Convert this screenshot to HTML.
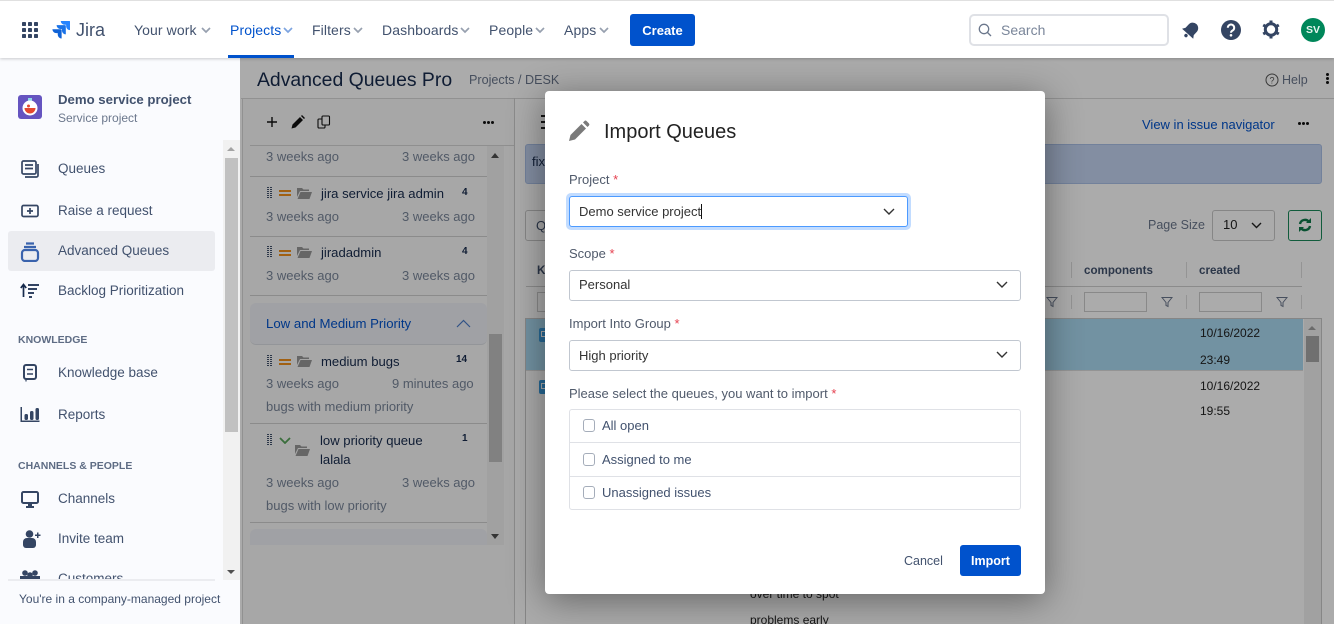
<!DOCTYPE html>
<html><head><meta charset="utf-8"><title>Import Queues</title>
<style>
*{box-sizing:border-box}
html,body{margin:0;padding:0;width:1334px;height:624px;overflow:hidden;background:#fff;font-family:"Liberation Sans",sans-serif;font-size:13px}
.t{position:absolute;white-space:nowrap;line-height:20px;margin-top:1px}
.n0{margin-top:0}
.a{position:absolute}
.nav{font-size:14px;color:#42526e;letter-spacing:.1px;margin-top:0}
.side{font-size:13.5px;color:#42526e}
.sec{font-size:10.5px;font-weight:bold;color:#5e6c84}
.q{font-size:13.1px;color:#172b4d}
.m{font-size:13px;color:#7a869a}
.lb{font-size:13px;color:#505a6b}
.sel{position:absolute;background:#fff;border:1px solid #c1c7d0;border-radius:3px}
.val{font-size:13px;color:#333}
.red{color:#e5404f}
.cb{position:absolute;left:583px;width:12px;height:13px;border:1px solid #a5adba;border-radius:3px;background:#fff}
.ln{position:absolute;background:#d0d0d0;height:1px;left:250px;width:237px}
.dh{position:absolute;left:267px;width:5px;height:11px;background:linear-gradient(90deg,transparent 2px,#f9f9f9 2px 3px,transparent 3px),repeating-linear-gradient(#42526e 0 1px,transparent 1px 2px)}
svg{position:absolute;display:block}
</style></head><body>

<!-- page content (dimmed by overlay) -->
<div class="a" id="content" style="left:240px;top:58px;width:1094px;height:566px;background:#fff;overflow:hidden">
<div style="position:absolute;left:-240px;top:-58px;width:1334px;height:624px">
  <div class="t" style="left:257px;top:69px;font-size:19.4px;color:#172b4d">Advanced Queues Pro</div>
  <div class="t n0" style="left:469px;top:70px;font-size:12.6px;color:#6b778c">Projects / DESK</div>
  <svg style="left:1265px;top:73px" width="14" height="14" viewBox="0 0 14 14"><circle cx="7" cy="7" r="6" fill="none" stroke="#555" stroke-width="1"/><text x="7" y="10.500" font-size="9" text-anchor="middle" fill="#555" font-family="Liberation Sans">?</text></svg>
  <div class="t n0" style="left:1282px;top:70px;font-size:12.500px;color:#6b778c">Help</div>
  <div class="a" style="left:1326px;top:73px;width:3px;height:3px;background:#111;border-radius:50%;box-shadow:0 4px 0 #111,0 8px 0 #111"></div>
  <div class="a" style="left:241px;top:98px;width:1093px;height:1px;background:#d8d8d8"></div>
  <div class="a" style="left:242px;top:98px;width:1px;height:526px;background:#d8d8d8"></div>
  <div class="a" style="left:514px;top:98px;width:1px;height:526px;background:#d0d0d0"></div>
  <div class="a" style="left:243px;top:99px;width:271px;height:525px;background:#f9f9f9"></div>

  <!-- queue toolbar -->
  <svg style="left:266px;top:116px" width="12" height="12" viewBox="0 0 12 12"><path d="M6 1v10M1 6h10" stroke="#111" stroke-width="1.400"/></svg>
  <svg style="left:291px;top:115px" width="14" height="14" viewBox="0 0 14 14"><path d="M0.500 13.500l1-4 7.500-7.500 3 3-7.500 7.500zM10 1l1-1 3 3-1 1z" fill="#111"/></svg>
  <svg style="left:317px;top:115px" width="14" height="14" viewBox="0 0 14 14" fill="none" stroke="#111" stroke-width="1.100"><rect x="5" y="1" width="7.500" height="9" rx="1"/><path d="M5 4H2a1 1 0 0 0-1 1v7a1 1 0 0 0 1 1h5a1 1 0 0 0 1-1v-2"/></svg>
  <div class="a" style="left:483px;top:121px;width:3px;height:3px;background:#111;border-radius:50%;box-shadow:4px 0 0 #111,8px 0 0 #111"></div>
  <div class="a" style="left:250px;top:145px;width:264px;height:1px;background:#d6d6d6"></div>

  <!-- queue scroll -->
  <div class="a" style="left:487px;top:146px;width:17px;height:399px;background:#f1f1f1"></div>
  <div class="a" style="left:489px;top:334px;width:13px;height:128px;background:#c1c1c1"></div>
  <div class="a" style="left:491px;top:153px;border:4px solid transparent;border-bottom:5px solid #505050;border-top:0"></div>
  <div class="a" style="left:491px;top:534px;border:4px solid transparent;border-top:5px solid #505050;border-bottom:0"></div>

  <div class="t m" style="left:266px;top:146px">3 weeks ago</div>
  <div class="t m" style="left:402px;top:146px">3 weeks ago</div>
  <div class="ln" style="top:176px"></div>

  <!-- row jira service -->
  <div class="dh" style="top:187px"></div>
  <div class="a" style="left:279px;top:190px;width:12px;height:2px;background:#f18f1b;box-shadow:0 4px 0 #f18f1b"></div>
  <svg style="left:297px;top:187px" width="15" height="12" viewBox="0 0 15 12"><path d="M0 1h5l1.500 1.500H12V4H3L0 10z" fill="#999"/><path d="M3.500 5H15l-2.500 7H0.500z" fill="#999"/></svg>
  <div class="t q" style="left:321px;top:183px">jira service jira admin</div>
  <div class="t" style="left:462px;top:182px;font-size:10px;font-weight:bold;color:#172b4d">4</div>
  <div class="t m" style="left:266px;top:206px">3 weeks ago</div>
  <div class="t m" style="left:402px;top:206px">3 weeks ago</div>
  <div class="ln" style="top:236px"></div>

  <!-- row jiradmin -->
  <div class="dh" style="top:246px"></div>
  <div class="a" style="left:279px;top:250px;width:12px;height:2px;background:#f18f1b;box-shadow:0 4px 0 #f18f1b"></div>
  <svg style="left:297px;top:246px" width="15" height="12" viewBox="0 0 15 12"><path d="M0 1h5l1.500 1.500H12V4H3L0 10z" fill="#999"/><path d="M3.500 5H15l-2.500 7H0.500z" fill="#999"/></svg>
  <div class="t q" style="left:321px;top:242px">jiradadmin</div>
  <div class="t" style="left:462px;top:241px;font-size:10px;font-weight:bold;color:#172b4d">4</div>
  <div class="t m" style="left:266px;top:265px">3 weeks ago</div>
  <div class="t m" style="left:402px;top:265px">3 weeks ago</div>
  <div class="ln" style="top:295px"></div>

  <!-- group -->
  <div class="a" style="left:250px;top:303px;width:237px;height:42px;background:#eff1f6;border-radius:6px;border-bottom:1px solid #dcdfe4"></div>
  <div class="t n0" style="left:266px;top:314px;font-size:13.200px;color:#0052cc">Low and Medium Priority</div>
  <svg style="left:456px;top:319px" width="15" height="9" viewBox="0 0 15 9"><path d="M1 8l6.500-6.500L14 8" fill="none" stroke="#4a7bc8" stroke-width="1.200"/></svg>

  <!-- medium bugs -->
  <div class="dh" style="top:355px"></div>
  <div class="a" style="left:279px;top:359px;width:12px;height:2px;background:#f18f1b;box-shadow:0 4px 0 #f18f1b"></div>
  <svg style="left:297px;top:355px" width="15" height="12" viewBox="0 0 15 12"><path d="M0 1h5l1.500 1.500H12V4H3L0 10z" fill="#999"/><path d="M3.500 5H15l-2.500 7H0.500z" fill="#999"/></svg>
  <div class="t q" style="left:321px;top:351px">medium bugs</div>
  <div class="t" style="left:456px;top:349px;font-size:10px;font-weight:bold;color:#172b4d">14</div>
  <div class="t m" style="left:266px;top:373px">3 weeks ago</div>
  <div class="t m" style="left:392px;top:373px">9 minutes ago</div>
  <div class="t m" style="left:266px;top:396px">bugs with medium priority</div>
  <div class="ln" style="top:423px"></div>

  <!-- low priority -->
  <div class="dh" style="top:434px"></div>
  <svg style="left:279px;top:437px" width="12" height="7" viewBox="0 0 12 7"><path d="M1 1l5 5 5-5" fill="none" stroke="#57a55a" stroke-width="1.800"/></svg>
  <svg style="left:295px;top:444px" width="15" height="12" viewBox="0 0 15 12"><path d="M0 1h5l1.500 1.500H12V4H3L0 10z" fill="#999"/><path d="M3.500 5H15l-2.500 7H0.500z" fill="#999"/></svg>
  <div class="t q" style="left:320px;top:430px">low priority queue</div>
  <div class="t q" style="left:320px;top:449px">lalala</div>
  <div class="t" style="left:462px;top:428px;font-size:10px;font-weight:bold;color:#172b4d">1</div>
  <div class="t m" style="left:266px;top:472px">3 weeks ago</div>
  <div class="t m" style="left:402px;top:472px">3 weeks ago</div>
  <div class="t m" style="left:266px;top:495px">bugs with low priority</div>
  <div class="ln" style="top:522px"></div>
  <div class="a" style="left:250px;top:529px;width:237px;height:16px;background:#eff1f6;border-radius:6px 6px 0 0"></div>

  <!-- right side -->
  <div class="a" style="left:541px;top:115px;width:12px;height:2px;background:#222;box-shadow:0 6px 0 #222,0 12px 0 #222"></div>
  <div class="t n0" style="left:1142px;top:115px;font-size:13px;color:#0052cc">View in issue navigator</div>
  <div class="a" style="left:1298px;top:122px;width:3px;height:3px;background:#111;border-radius:50%;box-shadow:4px 0 0 #111,8px 0 0 #111"></div>
  <div class="a" style="left:525px;top:144px;width:797px;height:40px;background:#c4d4f2;border:1px solid #aac0e8;border-radius:3px"></div>
  <div class="t" style="left:532px;top:151px;font-size:13px;color:#172b4d">fix</div>
  <div class="a" style="left:525px;top:210px;width:100px;height:31px;border:1px solid #c8c8c8;border-radius:3px"></div>
  <div class="t" style="left:536px;top:215px;font-size:13px;color:#42526e">Q</div>

  <div class="t n0" style="left:1148px;top:215px;font-size:12.500px;color:#6b778c">Page Size</div>
  <div class="a" style="left:1212px;top:210px;width:63px;height:31px;border:1px solid #c8c8c8;border-radius:3px"></div>
  <div class="t n0" style="left:1223px;top:215px;font-size:13px;color:#222">10</div>
  <svg style="left:1251px;top:222px" width="11" height="7" viewBox="0 0 11 7"><path d="M1 1l4.500 4.500L10 1" fill="none" stroke="#222" stroke-width="1.400"/></svg>
  <div class="a" style="left:1288px;top:210px;width:34px;height:31px;border:1px solid #1a8a5a;border-radius:3px"></div>
  <svg style="left:1298px;top:218px" width="14" height="14" viewBox="0 0 14 14" fill="none" stroke="#0d7a4a" stroke-width="2.400"><path d="M2 6a5 5 0 0 1 9-2"/><path d="M12 8a5 5 0 0 1-9 2"/><path d="M13 0v5H8z" fill="#0d7a4a" stroke="none"/><path d="M1 14V9h5z" fill="#0d7a4a" stroke="none"/></svg>

  <div class="t" style="left:537px;top:260px;font-size:11.600px;font-weight:bold;color:#42526e">K</div>
  <div class="t" style="left:1084px;top:260px;font-size:11.600px;font-weight:bold;color:#42526e">components</div>
  <div class="t" style="left:1199px;top:260px;font-size:11.600px;font-weight:bold;color:#42526e">created</div>
  <div class="a" style="left:1071px;top:262px;width:1px;height:16px;background:#ddd"></div>
  <div class="a" style="left:1186px;top:262px;width:1px;height:16px;background:#ddd"></div>
  <div class="a" style="left:1301px;top:262px;width:1px;height:16px;background:#ddd"></div>
  <div class="a" style="left:526px;top:286px;width:776px;height:1px;background:#d0d0d0"></div>
  <div class="a" style="left:537px;top:292px;width:60px;height:20px;border:1px solid #ccc"></div>
  <div class="a" style="left:1084px;top:292px;width:63px;height:20px;border:1px solid #ccc"></div>
  <div class="a" style="left:1199px;top:292px;width:63px;height:20px;border:1px solid #ccc"></div>
  <div class="a" style="left:1071px;top:295px;width:1px;height:14px;background:#ddd"></div>
  <div class="a" style="left:1186px;top:295px;width:1px;height:14px;background:#ddd"></div>
  <div class="a" style="left:1301px;top:295px;width:1px;height:14px;background:#ddd"></div>
  <svg style="left:1046px;top:296px" width="12" height="12" viewBox="0 0 12 12"><path d="M1 1.500h10L7 6.500V10.500L5 9.500V6.500z" fill="none" stroke="#6b778c"/></svg>
  <svg style="left:1161px;top:296px" width="12" height="12" viewBox="0 0 12 12"><path d="M1 1.500h10L7 6.500V10.500L5 9.500V6.500z" fill="none" stroke="#6b778c"/></svg>
  <svg style="left:1276px;top:296px" width="12" height="12" viewBox="0 0 12 12"><path d="M1 1.500h10L7 6.500V10.500L5 9.500V6.500z" fill="none" stroke="#6b778c"/></svg>

  <div class="a" style="left:525px;top:318px;width:797px;height:306px;border:1px solid #c8c8c8;border-bottom:0"></div>
  <div class="a" style="left:526px;top:319px;width:777px;height:51px;background:#aadaf2"></div>
  <div class="a" style="left:526px;top:370px;width:777px;height:1px;background:#ddd"></div>
  <div class="a" style="left:1304px;top:319px;width:17px;height:305px;background:#f1f1f1"></div>
  <div class="a" style="left:1306px;top:336px;width:13px;height:26px;background:#a8a8a8"></div>
  <div class="a" style="left:1308px;top:326px;border:4px solid transparent;border-bottom:4px solid #a0a0a0;border-top:0"></div>
  <div class="a" style="left:539px;top:328px;width:13px;height:14px;background:#3b9de0;border-radius:2px"></div>
  <div class="a" style="left:541px;top:331px;width:9px;height:6px;border:1px solid #fff"></div>
  <div class="a" style="left:539px;top:380px;width:13px;height:14px;background:#3b9de0;border-radius:2px"></div>
  <div class="a" style="left:541px;top:383px;width:9px;height:6px;border:1px solid #fff"></div>
  <div class="t n0" style="left:1200px;top:323px;font-size:12px;color:#222">10/16/2022</div>
  <div class="t" style="left:1200px;top:349px;font-size:12px;color:#222">23:49</div>
  <div class="t" style="left:1200px;top:375px;font-size:12px;color:#222">10/16/2022</div>
  <div class="t n0" style="left:1200px;top:401px;font-size:12px;color:#222">19:55</div>
  <div class="t n0" style="left:750px;top:584px;font-size:12px;color:#222">over time to spot</div>
  <div class="t" style="left:750px;top:609px;font-size:12px;color:#222">problems early</div>
</div>
<div class="a" style="left:0;top:0;width:1094px;height:566px;background:rgba(0,0,0,.33)"></div>
</div>

<!-- sidebar -->
<div class="a" style="left:0;top:58px;width:240px;height:566px;background:#fafbfe"></div>
<div class="a" style="left:18px;top:95px;width:24px;height:24px;background:#6554c0;border-radius:3px"></div>
<svg style="left:18px;top:95px" width="24" height="24" viewBox="0 0 24 24"><rect x="10" y="3" width="4" height="3" fill="#8fd8e8"/><circle cx="12" cy="13" r="7.500" fill="#fff"/><path d="M6.500 13a5.500 5.500 0 0 0 11 0z" fill="#e5492f"/><circle cx="10.500" cy="11" r="1.500" fill="#e5492f"/></svg>
<div class="t" style="left:58px;top:89px;font-size:13.200px;font-weight:bold;color:#42526e">Demo service project</div>
<div class="t n0" style="left:58px;top:108px;font-size:12px;color:#6b778c">Service project</div>

<div class="a" style="left:223px;top:140px;width:17px;height:440px;background:#f1f1f1"></div>
<div class="a" style="left:225px;top:158px;width:13px;height:274px;background:#c1c1c1"></div>
<div class="a" style="left:227px;top:147px;border:4px solid transparent;border-bottom:4px solid #a3a3a3;border-top:0"></div>
<div class="a" style="left:227px;top:570px;border:4px solid transparent;border-top:4px solid #505050;border-bottom:0"></div>

<svg style="left:21px;top:160px" width="18" height="18" viewBox="0 0 18 18" fill="none" stroke="#344563" stroke-width="1.700"><rect x="1" y="1" width="14" height="13" rx="1.500"/><path d="M4 5h8M4 8.500h8" /><path d="M17 4v11.500a1.500 1.500 0 0 1-1.500 1.500H4"/></svg>
<div class="t side" style="left:58px;top:158px">Queues</div>

<svg style="left:21px;top:204px" width="18" height="14" viewBox="0 0 18 14" fill="none" stroke="#344563" stroke-width="1.700"><rect x="1" y="1.500" width="16" height="11" rx="1.500"/><path d="M9 4v6M6 7h6"/></svg>
<div class="t side" style="left:58px;top:200px">Raise a request</div>

<div class="a" style="left:8px;top:231px;width:207px;height:40px;background:#ebecf0;border-radius:3px"></div>
<svg style="left:20px;top:241px" width="20" height="21" viewBox="0 0 20 21" fill="none" stroke="#3a63ad" stroke-width="2.200"><rect x="2" y="9" width="16" height="11" rx="3"/><path d="M4 6h12M6 2.500h8"/></svg>
<div class="t side" style="left:58px;top:240px">Advanced Queues</div>

<svg style="left:20px;top:283px" width="20" height="15" viewBox="0 0 20 15" stroke="#172b4d" fill="none"><path d="M3.500 14V2M0.800 5L3.500 1.500 6.200 5" stroke-width="1.700"/><path d="M8 2h11M8 6h9M8 10h6M9 14h3" stroke-width="1.700"/></svg>
<div class="t side" style="left:58px;top:280px">Backlog Prioritization</div>

<div class="t sec" style="left:18px;top:329px">KNOWLEDGE</div>
<svg style="left:23px;top:364px" width="14" height="18" viewBox="0 0 14 18" fill="none" stroke="#344563" stroke-width="2"><path d="M3 1h8a2 2 0 0 1 2 2v10a2 2 0 0 1-2 2H3a2 2 0 0 1-2-2V3a2 2 0 0 1 2-2z"/><path d="M4 5.500h6M4 10h6" stroke-width="1.500"/><path d="M3 15v2.500" stroke-width="1.200"/></svg>
<div class="t side" style="left:58px;top:362px">Knowledge base</div>

<svg style="left:20px;top:407px" width="20" height="15" viewBox="0 0 20 15" fill="#344563"><rect x="0.500" y="0" width="1.500" height="15"/><rect x="0.500" y="13.500" width="19" height="1.500"/><rect x="4.500" y="7" width="3.500" height="6" rx="1.500"/><rect x="10" y="4" width="3.500" height="9" rx="1.500"/><rect x="15.500" y="1" width="3.500" height="12" rx="1.500"/></svg>
<div class="t side" style="left:58px;top:404px">Reports</div>

<div class="t sec" style="left:18px;top:455px">CHANNELS &amp; PEOPLE</div>
<svg style="left:21px;top:491px" width="18" height="17" viewBox="0 0 18 17" fill="none"><rect x="1" y="1" width="16" height="11" rx="1.500" stroke="#344563" stroke-width="2"/><path d="M7 13h4v2h2v2H5v-2h2z" fill="#344563"/></svg>
<div class="t side" style="left:58px;top:488px">Channels</div>

<svg style="left:23px;top:530px" width="18" height="18" viewBox="0 0 18 18" fill="#344563"><circle cx="6.500" cy="4" r="3.800"/><path d="M0 12a4 4 0 0 1 4-4h5a4 4 0 0 1 4 4v3a3 3 0 0 1-3 3H3a3 3 0 0 1-3-3z"/><path d="M14 2.500h1.500v2H17.500V6H15.500v2H14V6h-2V4.500h2z"/></svg>
<div class="t side" style="left:58px;top:528px">Invite team</div>

<div class="a" style="left:0;top:560px;width:223px;height:19px;overflow:hidden">
  <div class="t side" style="left:58px;top:8px">Customers</div>
  <svg style="left:20px;top:10px" width="20" height="9" viewBox="0 0 20 9" fill="#344563"><circle cx="5" cy="3" r="2.800"/><circle cx="15" cy="3" r="2.800"/><circle cx="10" cy="5" r="2.800"/><rect x="0" y="6" width="20" height="3"/></svg>
</div>
<div class="a" style="left:8px;top:579px;width:207px;height:2px;background:#ebecf0"></div>
<div class="t" style="left:19px;top:588px;font-size:12px;color:#42526e">You're in a company-managed project</div>

<!-- header -->
<div class="a" style="left:0;top:0;width:1334px;height:58px;background:#fff;border-top:1px solid #e0e0e0;box-shadow:0 1px 3px rgba(0,0,0,.2)"></div>
<svg style="left:22px;top:22px" width="16" height="16" viewBox="0 0 16 16" fill="#344563"><rect width="4" height="4" rx=".8"/><rect x="6" width="4" height="4" rx=".8"/><rect x="12" width="4" height="4" rx=".8"/><rect y="6" width="4" height="4" rx=".8"/><rect x="6" y="6" width="4" height="4" rx=".8"/><rect x="12" y="6" width="4" height="4" rx=".8"/><rect y="12" width="4" height="4" rx=".8"/><rect x="6" y="12" width="4" height="4" rx=".8"/><rect x="12" y="12" width="4" height="4" rx=".8"/></svg>
<svg style="left:52px;top:21px" width="18" height="18" viewBox="0 0 18.500 18.500"><path d="M18.500 0.900V9.400a4 4 0 0 1-4-4V3.900H13a4 4 0 0 1-4-4h8.600a.9.9 0 0 1 .9 1z" fill="#2684ff"/><path d="M14.200 5.200V13.700a4 4 0 0 1-4-4V8.200H8.700a4 4 0 0 1-4-4h8.600a.9.9 0 0 1 .9 1z" fill="#1a73e8"/><path d="M9.900 9.500V18a4 4 0 0 1-4-4V12.500H4.400a4 4 0 0 1-4-4H9a.9.9 0 0 1 .9 1z" fill="#0f62d6"/></svg>
<div class="t n0" style="left:76px;top:20px;font-size:18px;color:#42526e">Jira</div>

<div class="t nav" style="left:134px;top:20px">Your work</div>
<div class="t nav" style="left:230px;top:20px;color:#0052cc">Projects</div>
<div class="t nav" style="left:312px;top:20px">Filters</div>
<div class="t nav" style="left:382px;top:20px">Dashboards</div>
<div class="t nav" style="left:489px;top:20px">People</div>
<div class="t nav" style="left:564px;top:20px">Apps</div>
<svg style="left:201px;top:27px" width="10" height="7" viewBox="0 0 10 7"><path d="M1 1l4 4 4-4" fill="none" stroke="#97a0af" stroke-width="1.700"/></svg>
<svg style="left:283px;top:27px" width="10" height="7" viewBox="0 0 10 7"><path d="M1 1l4 4 4-4" fill="none" stroke="#7da4e0" stroke-width="1.700"/></svg>
<svg style="left:353px;top:27px" width="10" height="7" viewBox="0 0 10 7"><path d="M1 1l4 4 4-4" fill="none" stroke="#97a0af" stroke-width="1.700"/></svg>
<svg style="left:460px;top:27px" width="10" height="7" viewBox="0 0 10 7"><path d="M1 1l4 4 4-4" fill="none" stroke="#97a0af" stroke-width="1.700"/></svg>
<svg style="left:535px;top:27px" width="10" height="7" viewBox="0 0 10 7"><path d="M1 1l4 4 4-4" fill="none" stroke="#97a0af" stroke-width="1.700"/></svg>
<svg style="left:599px;top:27px" width="10" height="7" viewBox="0 0 10 7"><path d="M1 1l4 4 4-4" fill="none" stroke="#97a0af" stroke-width="1.700"/></svg>
<div class="a" style="left:228px;top:55px;width:66px;height:3px;background:#0052cc"></div>
<div class="a" style="left:630px;top:14px;width:65px;height:32px;background:#0052cc;border-radius:3px"></div>
<div class="t" style="left:630px;top:20px;width:65px;text-align:center;font-size:13px;font-weight:bold;color:#fff">Create</div>

<div class="a" style="left:969px;top:14px;width:200px;height:32px;background:#fff;border:2px solid #dfe1e6;border-radius:5px"></div>
<svg style="left:978px;top:23px" width="14" height="14" viewBox="0 0 14 14" fill="none" stroke="#6b778c" stroke-width="1.300"><circle cx="6" cy="6" r="4.700"/><path d="M9.500 9.500L13 13"/></svg>
<div class="t n0" style="left:1001px;top:20px;font-size:14px;color:#7a869a">Search</div>
<svg style="left:1181px;top:20px" width="20" height="20" viewBox="0 0 20 20" fill="#344563"><g transform="rotate(42 10 10)"><path d="M10 2a5.500 5.500 0 0 0-5.500 5.500V12L2.500 15h15l-2-3V7.500A5.500 5.500 0 0 0 10 2z"/><circle cx="10" cy="17.500" r="1.700"/></g></svg>
<svg style="left:1221px;top:20px" width="20" height="20" viewBox="0 0 20 20"><circle cx="10" cy="10" r="10" fill="#344563"/><path d="M6.800 7.700a3.200 3.200 0 1 1 4.800 2.800c-1 .6-1.600 1-1.600 2.200" fill="none" stroke="#fff" stroke-width="2"/><circle cx="10" cy="15.300" r="1.300" fill="#fff"/></svg>
<svg style="left:1262px;top:20px" width="18" height="19" viewBox="0 0 18 19"><circle cx="9" cy="9.500" r="5.700" fill="none" stroke="#344563" stroke-width="3"/><g stroke="#344563" stroke-width="3"><path d="M9 0.500v3M9 15.500v3M1.200 5l2.600 1.500M14.200 12.500l2.600 1.500M1.200 14l2.600-1.500M14.200 6.500L16.800 5"/></g></svg>
<div class="a" style="left:1301px;top:18px;width:24px;height:24px;background:#00875a;border-radius:50%"></div>
<div class="t n0" style="left:1301px;top:20px;width:24px;text-align:center;font-size:10.500px;font-weight:bold;color:#e8f5ef">SV</div>

<!-- dialog -->
<div class="a" style="left:545px;top:91px;width:500px;height:503px;background:#fff;border-radius:4px;box-shadow:0 6px 36px rgba(0,0,0,.42)"></div>
<svg style="left:568px;top:120px" width="22" height="22" viewBox="0 0 22 22" fill="#7a7a7a"><path d="M1 21l1.500-6L13.500 4l4.500 4.500L7 19.500z"/><path d="M15 2.500l1.500-1.500a1.500 1.500 0 0 1 2 0l2.500 2.500a1.500 1.500 0 0 1 0 2L19.500 7z"/></svg>
<div class="t" style="left:604px;top:121px;font-size:20px;color:#222">Import Queues</div>

<div class="t lb" style="left:569px;top:169px">Project <span class="red">*</span></div>
<div class="a" style="left:566px;top:193px;width:345px;height:37px;border-radius:5px;background:#c2dcff"></div>
<div class="a" style="left:569px;top:196px;width:339px;height:31px;background:#fff;border:1px solid #4c9aff;border-radius:3px"></div>
<div class="t val" style="left:579px;top:201px">Demo service project</div>
<div class="a" style="left:701px;top:204px;width:1px;height:15px;background:#111"></div>
<svg style="left:883px;top:208px" width="12" height="8" viewBox="0 0 12 8"><path d="M1 1l5 5 5-5" fill="none" stroke="#333" stroke-width="1.400"/></svg>

<div class="t lb" style="left:569px;top:243px">Scope <span class="red">*</span></div>
<div class="sel" style="left:569px;top:270px;width:452px;height:31px"></div>
<div class="t val" style="left:579px;top:274px">Personal</div>
<svg style="left:996px;top:281px" width="12" height="8" viewBox="0 0 12 8"><path d="M1 1l5 5 5-5" fill="none" stroke="#333" stroke-width="1.400"/></svg>

<div class="t lb" style="left:569px;top:313px">Import Into Group <span class="red">*</span></div>
<div class="sel" style="left:569px;top:340px;width:452px;height:31px"></div>
<div class="t val" style="left:579px;top:345px">High priority</div>
<svg style="left:996px;top:351px" width="12" height="8" viewBox="0 0 12 8"><path d="M1 1l5 5 5-5" fill="none" stroke="#333" stroke-width="1.400"/></svg>

<div class="t lb" style="left:569px;top:383px">Please select the queues, you want to import <span class="red">*</span></div>
<div class="a" style="left:569px;top:409px;width:452px;height:101px;border:1px solid #dfe1e6;border-radius:3px"></div>
<div class="a" style="left:570px;top:442px;width:450px;height:1px;background:#dfe1e6"></div>
<div class="a" style="left:570px;top:476px;width:450px;height:1px;background:#dfe1e6"></div>
<div class="cb" style="top:419px"></div>
<div class="cb" style="top:453px"></div>
<div class="cb" style="top:486px"></div>
<div class="t val" style="left:602px;top:415px;color:#42526e">All open</div>
<div class="t val" style="left:602px;top:449px;color:#42526e">Assigned to me</div>
<div class="t val" style="left:602px;top:482px;color:#42526e">Unassigned issues</div>

<div class="t" style="left:904px;top:550px;font-size:12.500px;color:#42526e">Cancel</div>
<div class="a" style="left:960px;top:545px;width:61px;height:31px;background:#0052cc;border-radius:3px"></div>
<div class="t" style="left:960px;top:550px;width:61px;text-align:center;font-size:12.500px;font-weight:bold;color:#fff">Import</div>

</body></html>
